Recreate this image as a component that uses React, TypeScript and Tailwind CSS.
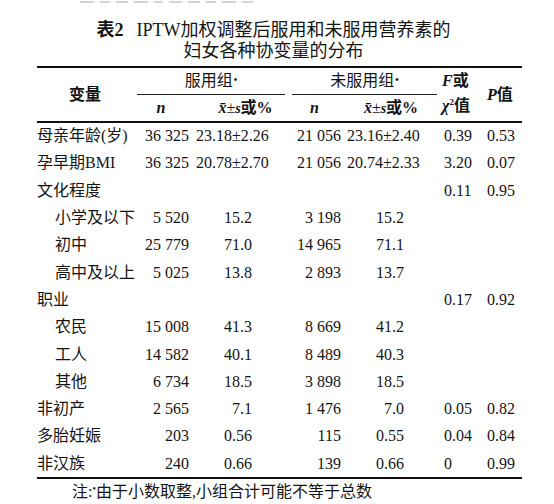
import React from "react";

type Row =
  | { kind: "main"; label: React.ReactNode; n1: string; m1: string; n2: string; m2: string; f: string; p: string }
  | { kind: "cat"; label: string; f: string; p: string }
  | { kind: "sub"; label: string; n1: string; m1: string; n2: string; m2: string; f?: string; p?: string; indent?: boolean };

const rows: Row[] = [
  { kind: "main", label: "母亲年龄(岁)", n1: "36 325", m1: "23.18±2.26", n2: "21 056", m2: "23.16±2.40", f: "0.39", p: "0.53" },
  { kind: "main", label: "孕早期BMI", n1: "36 325", m1: "20.78±2.70", n2: "21 056", m2: "20.74±2.33", f: "3.20", p: "0.07" },
  { kind: "cat", label: "文化程度", f: "0.11", p: "0.95" },
  { kind: "sub", indent: true, label: "小学及以下", n1: "5 520", m1: "15.2", n2: "3 198", m2: "15.2" },
  { kind: "sub", indent: true, label: "初中", n1: "25 779", m1: "71.0", n2: "14 965", m2: "71.1" },
  { kind: "sub", indent: true, label: "高中及以上", n1: "5 025", m1: "13.8", n2: "2 893", m2: "13.7" },
  { kind: "cat", label: "职业", f: "0.17", p: "0.92" },
  { kind: "sub", indent: true, label: "农民", n1: "15 008", m1: "41.3", n2: "8 669", m2: "41.2" },
  { kind: "sub", indent: true, label: "工人", n1: "14 582", m1: "40.1", n2: "8 489", m2: "40.3" },
  { kind: "sub", indent: true, label: "其他", n1: "6 734", m1: "18.5", n2: "3 898", m2: "18.5" },
  { kind: "sub", label: "非初产", n1: "2 565", m1: "7.1", n2: "1 476", m2: "7.0", f: "0.05", p: "0.82" },
  { kind: "sub", label: "多胎妊娠", n1: "203", m1: "0.56", n2: "115", m2: "0.55", f: "0.04", p: "0.84" },
  { kind: "sub", label: "非汉族", n1: "240", m1: "0.66", n2: "139", m2: "0.66", f: "0", p: "0.99" },
];

const grid = "grid grid-cols-[100px_52px_103px_49px_96px_43px_42px]";

function Mark() {
  return <span className="relative top-[-6px] text-[10px] font-bold ml-[1px]">•</span>;
}

function XBar() {
  return <span className="italic">x&#x0304;</span>;
}

export default function App() {
  return (
    <div
      className="w-[554px] h-[504px] bg-white text-[#141414] overflow-hidden"
      style={{ fontFamily: '"Liberation Serif", "Noto Sans CJK SC", serif' }}
    >
      {/* faint marks of a line cut off above */}
      <div className="h-[3px] overflow-hidden pl-[80px] flex gap-[6px] items-end">
        {[14, 10, 12, 14, 9, 13, 12, 10, 14, 11].map((w, i) => (
          <div key={i} className="h-[2px] bg-[#d4d4d4]" style={{ width: w }} />
        ))}
      </div>

      {/* Title */}
      <div className="mt-[17px] ml-[37px] w-[485px] pr-[12px] text-[18px] leading-[21px] text-center">
        <div>
          <span className="font-bold">表2</span>
          <span className="inline-block w-[13px]" />
          <span>IPTW加权调整后服用和未服用营养素的</span>
        </div>
        <div>妇女各种协变量的分布</div>
      </div>

      {/* Table */}
      <div className="ml-[37px] w-[485px] mt-[4px]">
        <div className="h-[2px] bg-[#111]" />
        {/* Header */}
        <div className={`${grid} grid-rows-[27px_26px] text-[16px] font-bold`}>
          <div className="row-span-2 col-start-1 row-start-1 flex items-center justify-center pr-[4px]">变量</div>
          <div className="col-start-2 col-span-2 row-start-1 flex items-end justify-center pb-[1px] mr-[7px] border-b border-[#222]">
            <span className="font-normal">服用组</span>
            <Mark />
          </div>
          <div className="col-start-4 col-span-2 row-start-1 flex items-end justify-center pb-[1px] border-b border-[#222]">
            <span className="font-normal">未服用组</span>
            <Mark />
          </div>
          <div className="col-start-6 row-start-1 row-span-2 flex flex-col justify-center pl-[5px] leading-[25px]">
            <div>
              <span className="italic">F</span>或
            </div>
            <div>
              <span className="italic">χ</span>
              <span className="relative top-[-6px] text-[9px]">2</span>值
            </div>
          </div>
          <div className="col-start-7 row-start-1 row-span-2 flex items-center pl-[7px]">
            <span className="italic">P</span>值
          </div>
          <div className="col-start-2 row-start-2 flex items-center justify-center pr-[4px]">
            <span className="italic">n</span>
          </div>
          <div className="col-start-3 row-start-2 flex items-center justify-center pl-[10px]">
            <XBar />
            <span className="font-normal">±</span>
            <span className="italic text-[14px]">s</span>或%
          </div>
          <div className="col-start-4 row-start-2 flex items-center justify-center pr-[4px]">
            <span className="italic">n</span>
          </div>
          <div className="col-start-5 row-start-2 flex items-center justify-center pl-[4px]">
            <XBar />
            <span className="font-normal">±</span>
            <span className="italic text-[14px]">s</span>或%
          </div>
        </div>
        <div className="h-[1.5px] bg-[#111]" />

        {/* Body */}
        <div className="text-[16px]">
          {rows.map((r, i) => {
            if (r.kind === "cat") {
              return (
                <div key={i} className={`${grid} h-[27.3px] items-center`}>
                  <div className="col-span-5">{r.label}</div>
                  <div className="pl-[7px]">{r.f}</div>
                  <div className="pl-[7px]">{r.p}</div>
                </div>
              );
            }
            if (r.kind === "main") {
              return (
                <div key={i} className={`${grid} h-[27.3px] items-center whitespace-nowrap`}>
                  <div>{r.label}</div>
                  <div className="text-right">{r.n1}</div>
                  <div className="pl-[7px]">{r.m1}</div>
                  <div className="text-right">{r.n2}</div>
                  <div className="pl-[6px]">{r.m2}</div>
                  <div className="pl-[7px]">{r.f}</div>
                  <div className="pl-[7px]">{r.p}</div>
                </div>
              );
            }
            return (
              <div key={i} className={`${grid} h-[27.3px] items-center whitespace-nowrap`}>
                <div className={r.indent ? "pl-[18px]" : ""}>{r.label}</div>
                <div className="text-right">{r.n1}</div>
                <div className="text-right pr-[40px]">{r.m1}</div>
                <div className="text-right">{r.n2}</div>
                <div className="text-right pr-[33px]">{r.m2}</div>
                <div className="pl-[7px]">{r.f ?? ""}</div>
                <div className="pl-[7px]">{r.p ?? ""}</div>
              </div>
            );
          })}
        </div>
        <div className="h-[2px] bg-[#111]" />
      </div>

      {/* Note */}
      <div className="ml-[72px] mt-[3px] text-[16px] leading-[20px] whitespace-nowrap">
        注:<span className="relative top-[-5px] text-[10px]">•</span>由于小数取整,小组合计可能不等于总数
      </div>
    </div>
  );
}
